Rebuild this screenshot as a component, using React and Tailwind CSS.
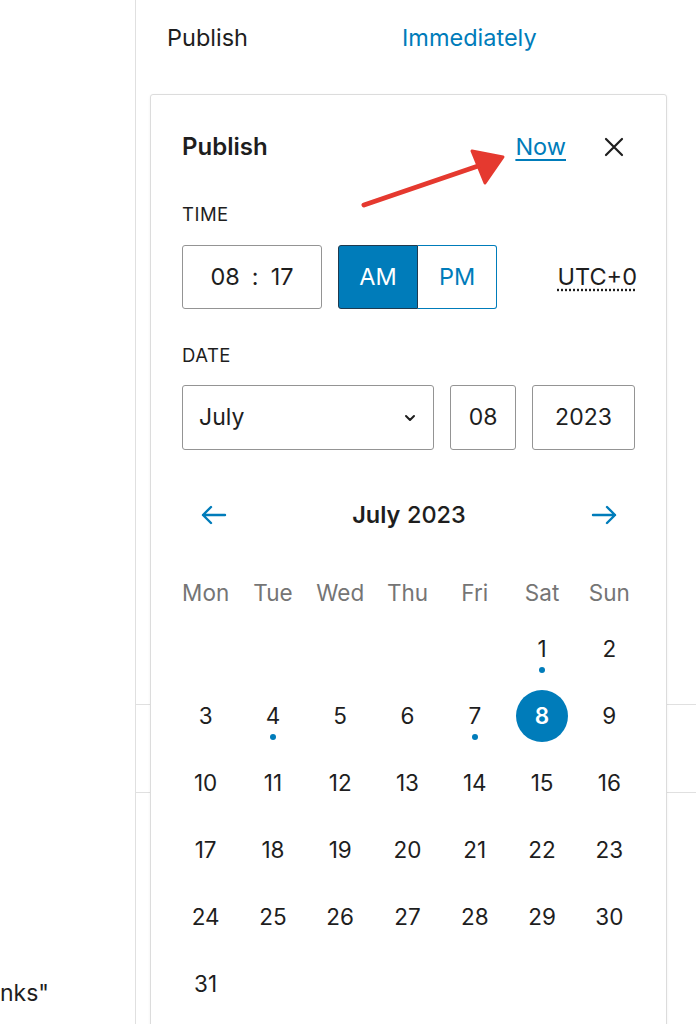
import React from 'react';

const weekdays = ['Mon', 'Tue', 'Wed', 'Thu', 'Fri', 'Sat', 'Sun'];

// July 2023 starts on a Saturday
const days = [null, null, null, null, null, ...Array.from({ length: 31 }, (_, i) => i + 1)];
const withPosts = [1, 4, 7];

const ArrowLeft = () => (
  <svg width="32" height="32" viewBox="0 0 32 32" fill="none" stroke="#007cba" strokeWidth="2.4" strokeLinecap="round" strokeLinejoin="round">
    <path d="M27 16H5M13 8l-8 8 8 8" />
  </svg>
);

const ArrowRight = () => (
  <svg width="32" height="32" viewBox="0 0 32 32" fill="none" stroke="#007cba" strokeWidth="2.4" strokeLinecap="round" strokeLinejoin="round">
    <path d="M5 16h22M19 8l8 8-8 8" />
  </svg>
);

const Calendar = () => (
  <div className="mt-[45px]">
    <div className="flex items-center justify-between h-[40px] pl-[16px] pr-[16px]">
      <ArrowLeft />
      <div className="text-[23.5px] text-[#1e1e1e]">
        <span className="font-semibold">July</span> <span className="font-medium">2023</span>
      </div>
      <ArrowRight />
    </div>
    <div className="ml-[-10px] w-[471px] mt-[36px]">
      <div className="grid grid-cols-7 h-[44px] items-center">
        {weekdays.map((d) => (
          <div key={d} className="text-center text-[22.5px] text-[#757575]">{d}</div>
        ))}
      </div>
      <div className="grid grid-cols-7">
        {days.map((d, i) => (
          <div key={i} className="h-[67px] flex items-center justify-center relative">
            {d === 8 ? (
              <div className="w-[52px] h-[52px] rounded-full bg-[#007cba] text-white flex items-center justify-center text-[22.5px] font-semibold">8</div>
            ) : d ? (
              <span className="text-[22.5px] text-[#1e1e1e]">{d}</span>
            ) : null}
            {withPosts.includes(d) && (
              <span className="absolute left-1/2 top-[52px] -translate-x-1/2 w-[6px] h-[6px] rounded-full bg-[#007cba]" />
            )}
          </div>
        ))}
      </div>
    </div>
  </div>
);

const Popover = () => (
  <div className="absolute top-[94px] left-[14px] w-[517px] h-[1000px] bg-white border border-[#dcdcdc] rounded-[3px] shadow-[0_1px_3px_rgba(0,0,0,0.06)] pl-[31px] pr-[30px] pt-[37px]">
    <div className="flex items-center h-[30px]">
      <span className="text-[24px] font-semibold text-[#1e1e1e]">Publish</span>
      <span className="ml-auto text-[23.5px] text-[#007cba] underline underline-offset-[4px] decoration-[1.5px]">Now</span>
      <svg className="ml-[38px] mr-[12px]" width="20" height="20" viewBox="0 0 20 20" stroke="#1e1e1e" strokeWidth="2.2" strokeLinecap="round">
        <path d="M2 2l16 16M18 2L2 18" />
      </svg>
    </div>

    <div className="mt-[42px] text-[18.5px] tracking-[0.5px] text-[#1e1e1e] leading-[20px]">TIME</div>
    <div className="mt-[21px] flex items-center h-[64px]">
      <div className="w-[140px] h-[64px] border border-[#949494] rounded-[3px] flex items-center justify-center text-[23.5px] text-[#1e1e1e] gap-[12px]">
        <span>08</span><span>:</span><span>17</span>
      </div>
      <div className="ml-[16px] flex h-[64px]">
        <div className="w-[80px] bg-[#007cba] border border-[#1e3a4f] rounded-l-[3px] text-white text-[23.5px] flex items-center justify-center">AM</div>
        <div className="w-[79px] border border-l-0 border-[#007cba] rounded-r-[3px] text-[#007cba] text-[23.5px] flex items-center justify-center">PM</div>
      </div>
      <span className="ml-auto mr-[-1px] text-[23.5px] text-[#1e1e1e] underline decoration-dotted underline-offset-[4px]">UTC+0</span>
    </div>

    <div className="mt-[36px] text-[18.5px] tracking-[0.5px] text-[#1e1e1e] leading-[20px]">DATE</div>
    <div className="mt-[20px] flex h-[65px] gap-[16px]">
      <div className="w-[252px] border border-[#949494] rounded-[3px] flex items-center pl-[16px] pr-[16px] text-[23px] text-[#1e1e1e]">
        <span>July</span>
        <svg className="ml-auto" width="14" height="14" viewBox="0 0 14 14" fill="none" stroke="#1e1e1e" strokeWidth="2" strokeLinecap="round" strokeLinejoin="round">
          <path d="M3 5l4 4 4-4" />
        </svg>
      </div>
      <div className="w-[66px] border border-[#949494] rounded-[3px] flex items-center justify-center text-[23px] text-[#1e1e1e]">08</div>
      <div className="w-[103px] border border-[#949494] rounded-[3px] flex items-center justify-center text-[23px] text-[#1e1e1e]">2023</div>
    </div>

    <Calendar />

    {/* annotation arrow */}
    <svg className="absolute left-0 top-0 pointer-events-none" width="517" height="200" viewBox="0 0 517 200">
      <path d="M213 110L330 70" stroke="#e5392f" strokeWidth="5" strokeLinecap="round" />
      <path d="M352 62L321 56L334 88Z" fill="#e5392f" stroke="#e5392f" strokeWidth="3" strokeLinejoin="round" />
    </svg>
  </div>
);

export default function App() {
  return (
    <div className="flex h-[1024px] w-[696px] overflow-hidden bg-white font-['Inter',sans-serif]">
      <div className="w-[135px] flex flex-col">
        <span className="mt-auto mb-[19px] text-[23px] leading-[24px] text-[#1e1e1e] whitespace-nowrap">nks"</span>
      </div>
      <div className="flex-1 relative border-l border-[#e0e0e0] flex flex-col">
        <div className="h-[76px] flex items-center pl-[31px] text-[23.5px]">
          <span className="w-[235px] text-[#1e1e1e]">Publish</span>
          <span className="text-[#007cba]">Immediately</span>
        </div>
        <div className="h-[629px] border-b border-[#e0e0e0]" />
        <div className="h-[88px] border-b border-[#e0e0e0]" />
        <Popover />
      </div>
    </div>
  );
}
